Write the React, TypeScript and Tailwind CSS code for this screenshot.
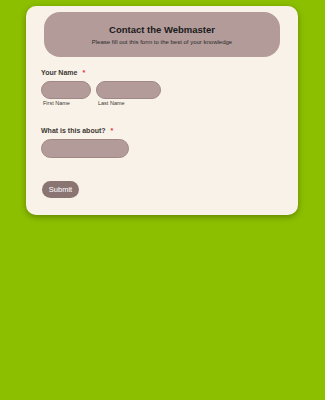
export default function App() {
  return (
    <div className="min-h-[400px] w-full bg-[#8cbf00] pt-[6px] pl-[26px] pr-[27px]" style={{ fontFamily: '"Liberation Sans", Arial, sans-serif' }}>
      <div className="bg-[#f9f2e8] rounded-[10px] shadow-[0_2px_6px_rgba(0,0,0,0.3)] pt-[6px] pb-[17px]">
        <div className="ml-[18px] mr-[18px] h-[45px] rounded-[16px] bg-[#b39b9a] flex flex-col items-center justify-center">
          <div className="text-[9.5px] font-bold text-[#1a1a1a] leading-none mt-[1px]">Contact the Webmaster</div>
          <div className="text-[6px] text-[#2a2a2a] leading-none mt-[5px]">Please fill out this form to the best of your knowledge</div>
        </div>
        <div className="px-[15px]">
          <div className="mt-[12px] h-[7px] text-[7px] font-bold text-[#3d3835] leading-none">
            Your Name <span className="text-[#d33] ml-[3px]">*</span>
          </div>
          <div className="mt-[5px] flex gap-[5px]">
            <div className="flex flex-col">
              <div className="w-[50px] h-[18px] rounded-full bg-[#b39b9a] border border-[#a08886]"></div>
              <div className="mt-[2px] h-[6px] text-[5.5px] text-[#3d3835] leading-none pl-[2px]">First Name</div>
            </div>
            <div className="flex flex-col">
              <div className="w-[65px] h-[18px] rounded-full bg-[#b39b9a] border border-[#a08886]"></div>
              <div className="mt-[2px] h-[6px] text-[5.5px] text-[#3d3835] leading-none pl-[2px]">Last Name</div>
            </div>
          </div>
          <div className="mt-[20px] h-[7px] text-[7px] font-bold text-[#3d3835] leading-none">
            What is this about? <span className="text-[#d33] ml-[3px]">*</span>
          </div>
          <div className="mt-[5px] w-[88px] h-[19px] rounded-full bg-[#b39b9a] border border-[#a08886]"></div>
          <div className="mt-[23px] pl-[1px]">
            <div className="w-[37px] h-[17px] rounded-full bg-[#8b7573] flex items-center justify-center text-[7.5px] text-white leading-none">Submit</div>
          </div>
        </div>
      </div>
    </div>
  );
}
